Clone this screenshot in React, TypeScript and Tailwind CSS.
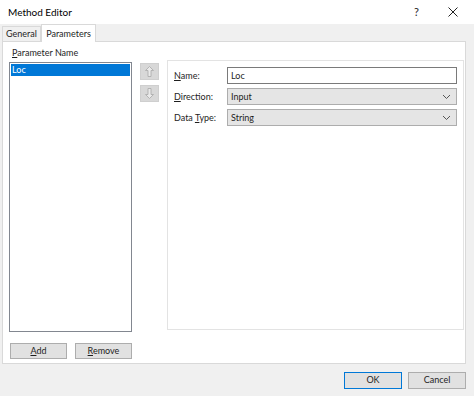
import React from "react";

const font = { fontFamily: 'Lato, "Noto Sans", sans-serif' };

function Arrow({ up }: { up: boolean }) {
  return (
    <svg width="9" height="11" viewBox="0 0 9 11" className={up ? "" : "rotate-180"}>
      <path d="M4.5 0.5 L8.5 4.5 L6 4.5 L6 10.5 L3 10.5 L3 4.5 L0.5 4.5 Z" fill="#eaeaea" stroke="#a8a8a8" strokeWidth="0.8" />
    </svg>
  );
}

function Chevron() {
  return (
    <svg width="9" height="6" viewBox="0 0 9 6">
      <path d="M1 1 L4.5 4.5 L8 1" fill="none" stroke="#555" strokeWidth="1" />
    </svg>
  );
}

export default function App() {
  return (
    <div className="w-[474px] h-[396px] bg-white flex flex-col text-[9px] text-[#1e1e1e] overflow-hidden" style={font}>
      {/* title */}
      <div className="h-[24px] flex items-center pl-[8px] pr-[16px] shrink-0">
        <span className="text-[10px] text-black">Method Editor</span>
        <span className="ml-auto text-[11px] mr-[29px]">?</span>
        <svg width="10" height="10" viewBox="0 0 10 10">
          <path d="M0.5 0.5 L9.5 9.5 M9.5 0.5 L0.5 9.5" stroke="#222" strokeWidth="1" />
        </svg>
      </div>
      <div className="flex-1 bg-[#f0f0f0] flex flex-col">
        <div className="flex flex-col pl-[2px] pr-[8px] h-[340px]">
          {/* tabs */}
          <div className="flex items-end h-[17px] relative z-10">
            <div className="h-[15px] w-[39px] flex items-center justify-center border border-b-0 border-[#d9d9d9] bg-[#f0f0f0]">General</div>
            <div className="h-[18px] w-[55px] -mb-[1px] flex items-center justify-center border border-b-0 border-[#d9d9d9] bg-white">Parameters</div>
          </div>
          <div className="flex-1 bg-white border border-[#d9d9d9] flex flex-col pl-[6px] pr-[1px]">
            <div className="pl-[3px] mt-[4px] h-[14px] leading-[14px]">
              <span className="underline">P</span>arameter Name
            </div>
            <div className="flex mt-[0px]">
              <div className="w-[123px] h-[270px] mt-[2px] border border-[#828790] p-[1px]">
                <div className="bg-[#0078d7] text-white h-[12px] leading-[12px] pl-[1px]">Loc</div>
              </div>
              <div className="flex flex-col w-[20px] ml-[8px] mt-[3px] gap-[5px]">
                <div className="w-[19px] h-[17px] bg-[#d8d8d8] border border-[#cfcfcf] flex items-center justify-center">
                  <Arrow up />
                </div>
                <div className="w-[19px] h-[17px] bg-[#d8d8d8] border border-[#cfcfcf] flex items-center justify-center">
                  <Arrow up={false} />
                </div>
              </div>
              <div className="ml-[7px] w-[297px] h-[270px] border border-[#e3e3e3] flex flex-col pt-[6px] pl-[6px] pr-[6px] gap-[4px]">
                <div className="flex items-center h-[17px]">
                  <div className="w-[53px]"><span className="underline">N</span>ame:</div>
                  <div className="flex-1 h-[17px] border border-[#7a7a7a] flex items-center pl-[3px]">Loc</div>
                </div>
                <div className="flex items-center h-[17px]">
                  <div className="w-[53px]"><span className="underline">D</span>irection:</div>
                  <div className="flex-1 h-[17px] border border-[#adadad] bg-[#e5e5e5] flex items-center pl-[3px] pr-[5px]">
                    <span>Input</span>
                    <span className="ml-auto flex"><Chevron /></span>
                  </div>
                </div>
                <div className="flex items-center h-[17px]">
                  <div className="w-[53px]">Data <span className="underline">T</span>ype:</div>
                  <div className="flex-1 h-[17px] border border-[#adadad] bg-[#e5e5e5] flex items-center pl-[3px] pr-[5px]">
                    <span>String</span>
                    <span className="ml-auto flex"><Chevron /></span>
                  </div>
                </div>
              </div>
            </div>
            <div className="flex gap-[8px] mt-[11px] ml-[1px]">
              <div className="w-[57px] h-[16px] bg-[#e1e1e1] border border-[#adadad] flex items-center justify-center">
                <span><span className="underline">A</span>dd</span>
              </div>
              <div className="w-[57px] h-[16px] bg-[#e1e1e1] border border-[#adadad] flex items-center justify-center">
                <span><span className="underline">R</span>emove</span>
              </div>
            </div>
          </div>
        </div>
        <div className="flex-1 flex items-center justify-end pr-[8px] gap-[6px] pt-[0px]">
          <div className="w-[58px] h-[17px] bg-[#e1e1e1] border border-[#0078d7] flex items-center justify-center">OK</div>
          <div className="w-[58px] h-[17px] bg-[#e1e1e1] border border-[#adadad] flex items-center justify-center">Cancel</div>
        </div>
      </div>
    </div>
  );
}
